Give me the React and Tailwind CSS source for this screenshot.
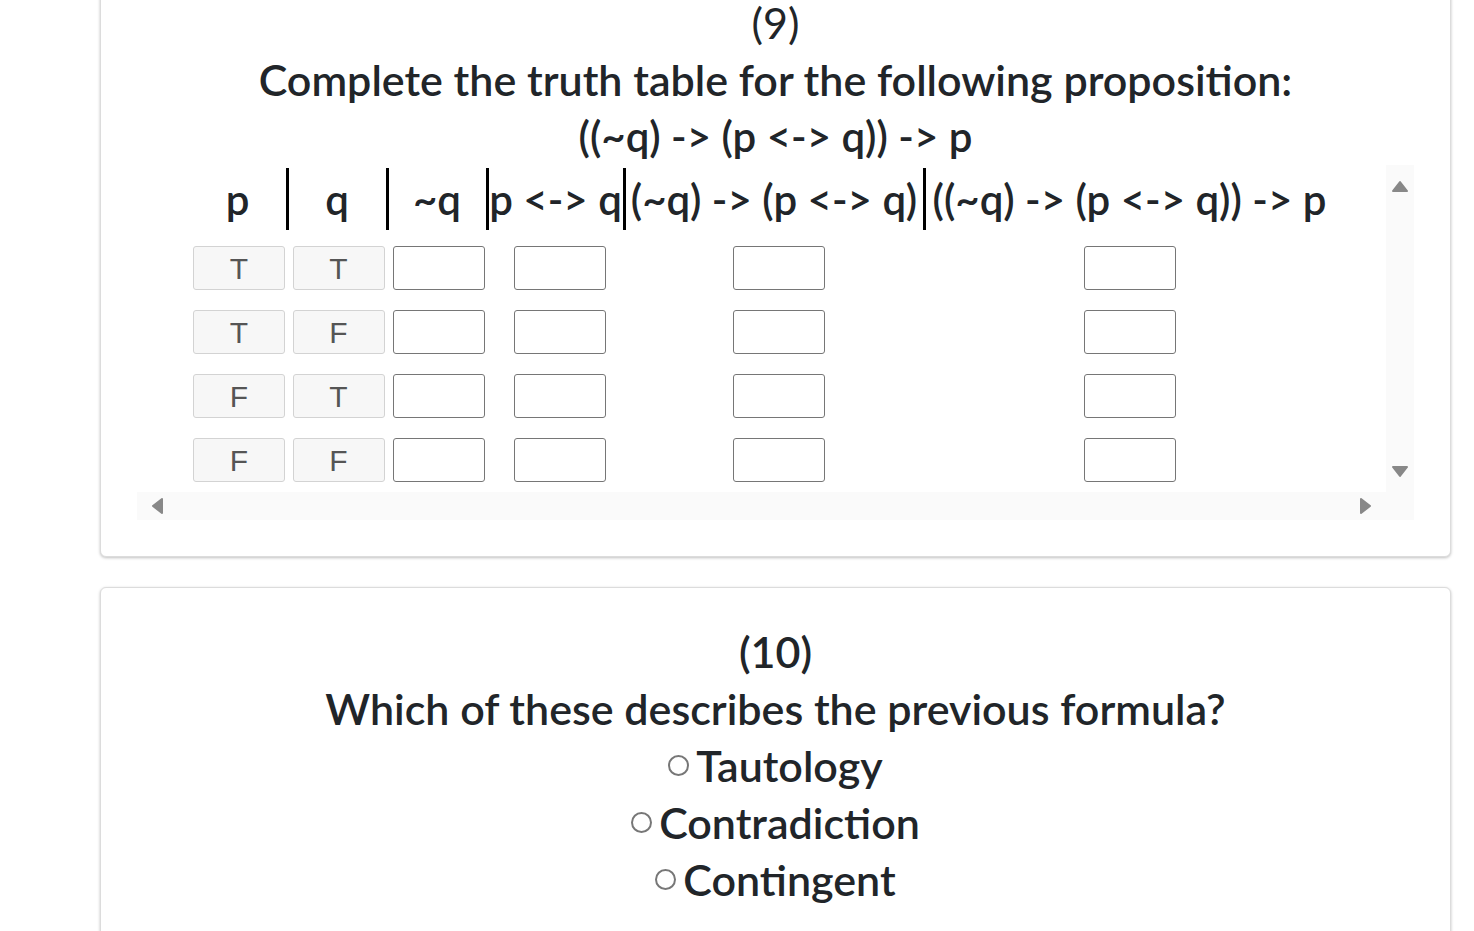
import React from "react";

const rows = [
  ["T", "T"],
  ["T", "F"],
  ["F", "T"],
  ["F", "F"],
];

const cols = [
  { label: "p", w: "w-[99px]", bar: true, pad: "" },
  { label: "q", w: "w-[100px]", bar: true, pad: "" },
  { label: "~q", w: "w-[100px]", bar: true, pad: "" },
  { label: "p <-> q", w: "w-[137px]", bar: true, pad: "pl-[5px]" },
  { label: "(~q) -> (p <-> q)", w: "w-[300px]", bar: true, pad: "pl-[6px]" },
  { label: "((~q) -> (p <-> q)) -> p", w: "w-[408px]", bar: false, pad: "" },
];

const Arrow = ({ dir }) => {
  // small grey triangle like the browser scrollbar buttons
  const pts = {
    up: "1,11 8,2 15,11",
    down: "1,1 8,10 15,1",
    left: "11,1 2,8 11,15",
    right: "1,1 10,8 1,15",
  }[dir];
  const size = dir === "up" || dir === "down" ? "w-[16px] h-[12px]" : "w-[12px] h-[16px]";
  const vb = dir === "up" || dir === "down" ? "0 0 16 12" : "0 0 12 16";
  return (
    <svg viewBox={vb} className={size}>
      <polygon points={pts} fill="#888" stroke="#888" strokeWidth="2" strokeLinejoin="round" />
    </svg>
  );
};

const Box = ({ value }) =>
  value ? (
    <div className="w-[92px] h-[44px] rounded-[3px] border border-[#d3d3d3] bg-[#f7f7f7] flex items-center justify-center text-[30px] text-[#555] font-['Liberation_Sans',Arial,sans-serif]">
      {value}
    </div>
  ) : (
    <div className="w-[92px] h-[44px] rounded-[3px] border border-[#767676] bg-white" />
  );

const Radio = ({ label }) => (
  <div className="flex items-center justify-center gap-[7px]">
    <span className="w-[21px] h-[21px] rounded-full border-2 border-[#777] bg-white" />
    <span>{label}</span>
  </div>
);

export default function App() {
  return (
    <div className="w-full h-[931px] overflow-hidden bg-white text-[#212529] font-['Lato','Noto_Sans',sans-serif]">
      <div className="pl-[100px] pr-[23px]">
        {/* question 9 */}
        <div className="-mt-[44px] border border-[#dcdcdc] rounded-md shadow-[0_1px_3px_rgba(0,0,0,0.25)] bg-white pt-[43px] pb-[36px] px-[36px]">
          <div className="text-center leading-[57px]">
            <div className="font-normal text-[43px] leading-[45px] mb-[6px]">(9)</div>
            <div className="font-semibold text-[43px]">Complete the truth table for the following proposition:</div>
            <div className="font-semibold text-[42px]">((~q) -&gt; (p &lt;-&gt; q)) -&gt; p</div>
          </div>

          <div className="flex flex-col">
            <div className="flex">
              <div className="flex-1 flex justify-center">
                <div className="flex flex-col">
                  <div className="flex h-[71px]">
                    {cols.map((c) => (
                      <div key={c.label} className={`${c.w} pt-[3px]`}>
                        <div
                          className={`h-[62px] flex items-center justify-center whitespace-nowrap text-[42px] font-semibold ${
                            c.bar ? "border-r-[3px] border-black" : ""
                          }`}
                        >
                          {c.label}
                        </div>
                      </div>
                    ))}
                  </div>
                  {rows.map((r, i) => (
                    <div key={i} className="flex h-[64px] items-center">
                      {cols.map((c, j) => (
                        <div key={c.label} className={`${c.w} ${c.pad} flex justify-center`}>
                          <Box value={j < 2 ? r[j] : null} />
                        </div>
                      ))}
                    </div>
                  ))}
                </div>
              </div>
              {/* vertical scrollbar */}
              <div className="w-[28px] bg-[#fafafa] flex flex-col items-center justify-between pt-[15px] pb-[14px]">
                <Arrow dir="up" />
                <Arrow dir="down" />
              </div>
            </div>
            {/* horizontal scrollbar */}
            <div className="h-[28px] bg-[#fafafa] flex items-center justify-between pl-[14px] pr-[42px]">
              <Arrow dir="left" />
              <Arrow dir="right" />
            </div>
          </div>
        </div>

        {/* question 10 */}
        <div className="mt-[30px] border border-[#dcdcdc] rounded-md shadow-[0_1px_3px_rgba(0,0,0,0.25)] bg-white pt-[35px] pb-[40px] px-[36px]">
          <div className="text-center text-[43px] leading-[57px] font-semibold">
            <div>(10)</div>
            <div>Which of these describes the previous formula?</div>
            <Radio label="Tautology" />
            <Radio label="Contradiction" />
            <Radio label="Contingent" />
          </div>
        </div>
      </div>
    </div>
  );
}
